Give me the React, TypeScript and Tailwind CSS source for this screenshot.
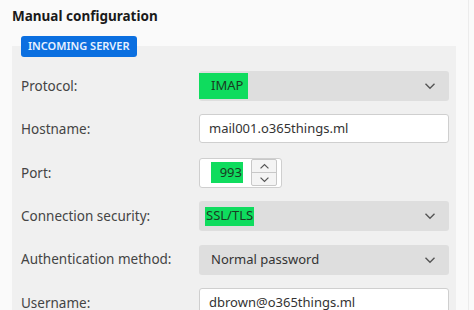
import { useState } from 'react';

function Chevron({ className = '' }: { className?: string }) {
  return (
    <svg viewBox="0 0 12 8" className={className} fill="none" stroke="currentColor" strokeWidth="1.4">
      <path d="M1.5 1.8 6 6.2l4.5-4.4" />
    </svg>
  );
}

function Select({ value, highlight }: { value: string; highlight?: 'full' | 'inset' }) {
  return (
    <div className="flex h-[30px] items-center justify-between rounded-[3px] bg-[#dedede] pr-[13px]">
      {highlight === 'full' && (
        <span className="flex h-[26px] items-center bg-[#0fdc5e] pl-[12px] pr-[5px] text-[#1a3a22]">{value}</span>
      )}
      {highlight === 'inset' && (
        <span className="ml-[6px] flex h-[19px] items-center bg-[#0fdc5e] px-[1px] text-[#1a3a22]">{value}</span>
      )}
      {!highlight && <span className="pl-[12px] text-[#333]">{value}</span>}
      <Chevron className="h-[8px] w-[12px] text-[#555]" />
    </div>
  );
}

function TextInput({ value }: { value: string }) {
  return (
    <div className="flex h-[29px] items-center rounded-[3px] border border-[#cfcfcf] bg-white pl-[9px] text-[#333]">
      {value}
    </div>
  );
}

function PortInput() {
  const [port] = useState('993');
  return (
    <div className="flex h-[30px] w-[83px] items-center rounded-[3px] border border-[#cfcfcf] bg-white pl-[11px]">
      <span className="flex h-[21px] w-[32px] items-center justify-end bg-[#0fdc5e] pr-[1px] text-[#1a3a22]">{port}</span>
      <div className="ml-[8px] flex h-[27px] w-[26px] flex-col rounded-[2px] border border-[#c8c8c8] bg-[#f4f4f4]">
        <div className="flex flex-1 items-center justify-center border-b border-[#c8c8c8] text-[#555]">
          <Chevron className="h-[7px] w-[11px] rotate-180" />
        </div>
        <div className="flex flex-1 items-center justify-center text-[#555]">
          <Chevron className="h-[7px] w-[11px]" />
        </div>
      </div>
    </div>
  );
}

const rows: { label: string; control: React.ReactNode }[] = [
  { label: 'Protocol:', control: <Select value="IMAP" highlight="full" /> },
  { label: 'Hostname:', control: <TextInput value="mail001.o365things.ml" /> },
  { label: 'Port:', control: <PortInput /> },
  { label: 'Connection security:', control: <Select value="SSL/TLS" highlight="inset" /> },
  { label: 'Authentication method:', control: <Select value="Normal password" /> },
  { label: 'Username:', control: <TextInput value="dbrown@o365things.ml" /> },
];

export default function App() {
  return (
    <main
      className="h-[310px] w-[474px] overflow-hidden bg-[#fafafa] text-[13.5px]"
      style={{ fontFamily: '"Noto Sans", "Open Sans", sans-serif' }}
    >
      <div className="flex h-full">
        <div className="w-[469px] border-r border-[#ececec] pl-[12px] pr-[12px]">
          <h1 className="pt-[6px] text-[13.5px] font-bold leading-[20px] text-[#1a1a1a]">Manual configuration</h1>

          <section className="mt-[20px] flex flex-col bg-[#f0f0f0] pb-4 pl-[9px] pr-[7px]">
            <div className="-mt-[10px] flex h-[21px] w-fit items-center rounded-[3px] bg-[#0b6fe0] px-[7px] text-[11px] font-semibold text-[#e8f1ff]">
              INCOMING SERVER
            </div>

            <div className="mt-[14px] grid grid-cols-[178px_1fr] gap-y-[13.4px] text-[13px]">
              {rows.map((r) => (
                <div key={r.label} className="contents">
                  <div className="flex h-[30px] items-center text-[13.5px] text-[#444]">{r.label}</div>
                  <div>{r.control}</div>
                </div>
              ))}
            </div>
          </section>
        </div>
      </div>
    </main>
  );
}
